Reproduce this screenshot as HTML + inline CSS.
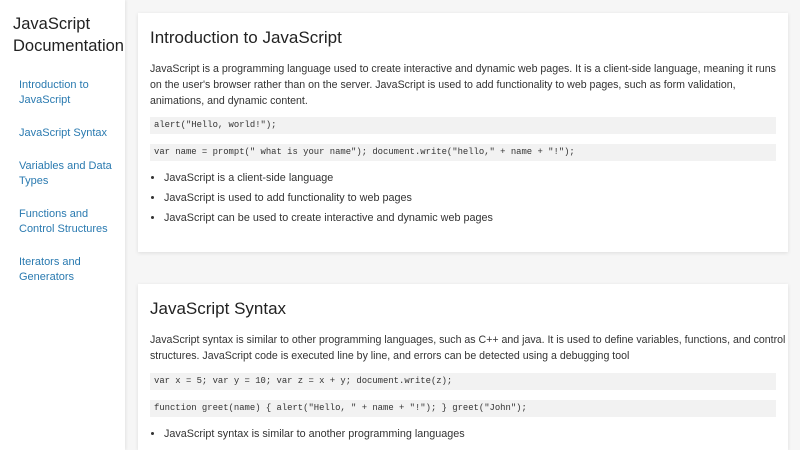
<!DOCTYPE html>
<html style="width:800px;height:450px;overflow:hidden"><head><meta charset="utf-8"><style>
*{box-sizing:border-box;margin:0;padding:0}
body{width:800px;height:450px;overflow:hidden;background:#f6f6f6;font-family:"Liberation Sans",sans-serif;color:#333;position:relative}
.side{position:absolute;left:0;top:0;width:125px;height:450px;background:#fff;box-shadow:1px 0 3px rgba(0,0,0,.08)}
.side h1{font-weight:normal;font-size:16.5px;line-height:22px;margin:13px 0 0 13px;color:#222;white-space:nowrap}
.side ul{list-style:none;margin:21px 0 0 19px}
.side li{font-size:11px;line-height:15px;color:#2a7ab0;margin-bottom:18px;width:95px}
.card{position:absolute;left:138px;width:650px;background:#fff;box-shadow:0 1px 4px rgba(0,0,0,.1);padding:0 12px;overflow:hidden}
.card h2{font-weight:normal;font-size:17px;color:#222;margin-top:15px;line-height:20px}
.card p{font-size:10.6px;line-height:16px;margin-top:13px;color:#333;white-space:nowrap}
.code{font-family:"Liberation Mono",monospace;font-size:8.9px;background:#f2f2f2;height:17px;line-height:17px;padding-left:4px;margin-top:10px;color:#333;white-space:nowrap}
.card ul{margin:7px 0 0 14px;font-size:10.8px;line-height:20px}
</style></head><body>
<div class="side"><h1>JavaScript<br>Documentation</h1>
<ul><li>Introduction to JavaScript</li><li>JavaScript Syntax</li><li>Variables and Data Types</li><li>Functions and Control Structures</li><li>Iterators and Generators</li></ul></div>
<div class="card" style="top:13px;height:239px">
<h2>Introduction to JavaScript</h2>
<p>JavaScript is a programming language used to create interactive and dynamic web pages. It is a client-side language, meaning it runs<br>on the user's browser rather than on the server. JavaScript is used to add functionality to web pages, such as form validation,<br>animations, and dynamic content.</p>
<div class="code" style="margin-top:8px">alert("Hello, world!");</div>
<div class="code">var name = prompt(" what is your name"); document.write("hello," + name + "!");</div>
<ul><li>JavaScript is a client-side language</li><li>JavaScript is used to add functionality to web pages</li><li>JavaScript can be used to create interactive and dynamic web pages</li></ul>
</div>
<div class="card" style="top:284px;height:166px">
<h2 style="margin-top:15px">JavaScript Syntax</h2>
<p>JavaScript syntax is similar to other programming languages, such as C++ and java. It is used to define variables, functions, and control<br>structures. JavaScript code is executed line by line, and errors can be detected using a debugging tool</p>
<div class="code" style="margin-top:9px">var x = 5; var y = 10; var z = x + y; document.write(z);</div>
<div class="code">function greet(name) { alert("Hello, " + name + "!"); } greet("John");</div>
<ul><li>JavaScript syntax is similar to another programming languages</li></ul>
</div>
</body></html>
